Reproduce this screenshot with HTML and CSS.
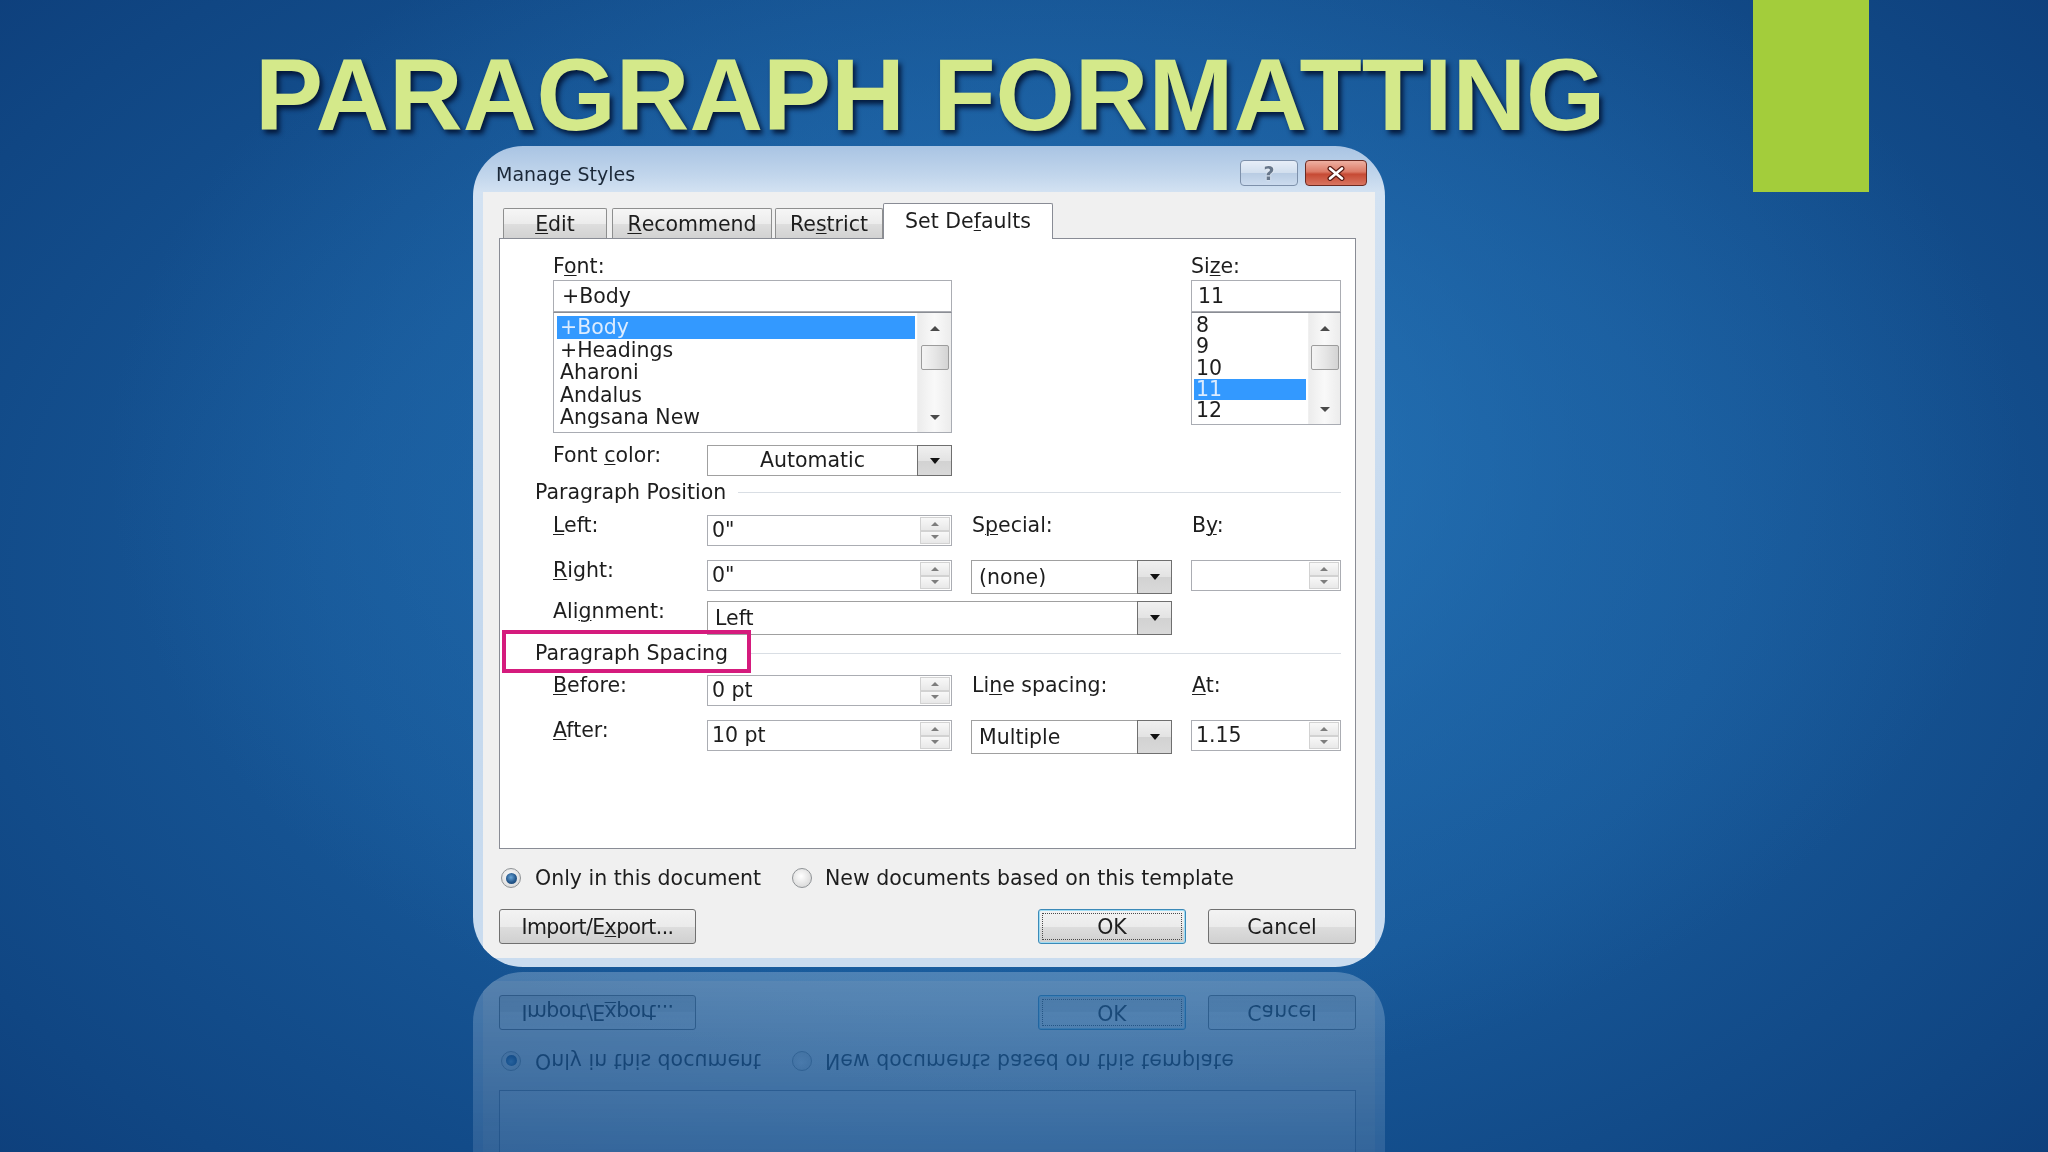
FILE: index.html
```html
<!DOCTYPE html>
<html>
<head>
<meta charset="utf-8">
<link rel="stylesheet" href="styles.css">
</head>
<body>
<div class="slide">
  <h1 class="title">PARAGRAPH FORMATTING</h1>
  <div class="accent"></div>

  <div class="dialog">
    <div class="titlebar">
      <span class="caption">Manage Styles</span>
      <div class="capbtns">
        <span class="help">?</span>
        <span class="close">
          <svg width="22" height="15" viewBox="0 0 22 15"><path d="M5 2.5 L17 12.5 M17 2.5 L5 12.5" stroke="#5b1c15" stroke-width="5" stroke-linecap="round"/><path d="M5 2.5 L17 12.5 M17 2.5 L5 12.5" stroke="#ffffff" stroke-width="2.6" stroke-linecap="round"/></svg>
        </span>
      </div>
    </div>

    <div class="client">
      <div class="tabs">
        <span class="tab t-edit"><u>E</u>dit</span>
        <span class="tab t-rec"><u>R</u>ecommend</span>
        <span class="tab t-res">Re<u>s</u>trict</span>
        <span class="tab t-set active">Set De<u>f</u>aults</span>
      </div>

      <div class="panel">
        <div class="grid r-font">
          <div class="fgroup g-font">
            <div class="glbl">F<u>o</u>nt:</div>
            <div class="textbox">+Body</div>
            <div class="listbox lb-font">
              <div class="items">
                <div class="item sel">+Body</div>
                <div class="item">+Headings</div>
                <div class="item">Aharoni</div>
                <div class="item">Andalus</div>
                <div class="item">Angsana New</div>
              </div>
              <div class="vscroll">
                <span class="sarrow"><i class="tri-up"></i></span>
                <span class="thumb"></span>
                <span class="sfill"></span>
                <span class="sarrow"><i class="tri-down"></i></span>
              </div>
            </div>
          </div>
          <div class="fgroup g-size">
            <div class="glbl">Si<u>z</u>e:</div>
            <div class="textbox tb-size">11</div>
            <div class="listbox lb-size">
              <div class="items">
                <div class="item">8</div>
                <div class="item">9</div>
                <div class="item">10</div>
                <div class="item sel">11</div>
                <div class="item">12</div>
              </div>
              <div class="vscroll">
                <span class="sarrow"><i class="tri-up"></i></span>
                <span class="thumb"></span>
                <span class="sfill"></span>
                <span class="sarrow"><i class="tri-down"></i></span>
              </div>
            </div>
          </div>
        </div>

        <div class="grid r-color">
          <div class="rl">Font <u>c</u>olor:</div>
          <div class="combo c-color"><span class="val center">Automatic</span><span class="dd"><i class="tri-dd"></i></span></div>
        </div>

        <div class="hdr h-pos"><span class="htext">Paragraph Position</span><span class="line"></span></div>

        <div class="grid r-left">
          <div class="rl"><u>L</u>eft:</div>
          <div class="spin"><span class="val">0"</span><span class="sb"><span class="half"><i class="st-up"></i></span><span class="half"><i class="st-dn"></i></span></span></div>
          <div class="rl rl2">S<u>p</u>ecial:</div>
          <div class="rl rl2">B<u>y</u>:</div>
        </div>

        <div class="grid r-right">
          <div class="rl"><u>R</u>ight:</div>
          <div class="spin"><span class="val">0"</span><span class="sb"><span class="half"><i class="st-up"></i></span><span class="half"><i class="st-dn"></i></span></span></div>
          <div class="combo"><span class="val">(none)</span><span class="dd"><i class="tri-dd"></i></span></div>
          <div class="spin"><span class="val"></span><span class="sb"><span class="half"><i class="st-up"></i></span><span class="half"><i class="st-dn"></i></span></span></div>
        </div>

        <div class="grid r-align">
          <div class="rl">Ali<u>g</u>nment:</div>
          <div class="combo c-wide"><span class="val">Left</span><span class="dd"><i class="tri-dd"></i></span></div>
        </div>

        <div class="hdr h-spc"><span class="htext mark">Paragraph Spacing</span><span class="line"></span></div>

        <div class="grid r-before">
          <div class="rl"><u>B</u>efore:</div>
          <div class="spin"><span class="val">0 pt</span><span class="sb"><span class="half"><i class="st-up"></i></span><span class="half"><i class="st-dn"></i></span></span></div>
          <div class="rl rl2">Li<u>n</u>e spacing:</div>
          <div class="rl rl2"><u>A</u>t:</div>
        </div>

        <div class="grid r-after">
          <div class="rl"><u>A</u>fter:</div>
          <div class="spin"><span class="val">10 pt</span><span class="sb"><span class="half"><i class="st-up"></i></span><span class="half"><i class="st-dn"></i></span></span></div>
          <div class="combo"><span class="val">Multiple</span><span class="dd"><i class="tri-dd"></i></span></div>
          <div class="spin"><span class="val">1.15</span><span class="sb"><span class="half"><i class="st-up"></i></span><span class="half"><i class="st-dn"></i></span></span></div>
        </div>
      </div>

      <div class="radios">
        <span class="radio on"><span class="dot"></span></span>
        <span class="rtext">Only in this document</span>
        <span class="radio r2"></span>
        <span class="rtext">New documents based on this template</span>
      </div>

      <div class="buttons">
        <span class="btn b-imp">Import/E<u>x</u>port...</span>
        <span class="btn b-ok"><span class="focus">OK</span></span>
        <span class="btn b-cancel">Cancel</span>
      </div>
    </div>
  </div>
</div>
</body>
</html>
```

FILE: styles.css
```css
* { box-sizing: border-box; }

body { margin: 0; }

.slide {
  width: 2048px;
  height: 1152px;
  overflow: hidden;
  display: grid;
  grid-template-columns: 473px 912px 368px 116px 179px;
  grid-template-rows: 146px 821px 185px;
  background:
    radial-gradient(ellipse 55% 65% at 52% 40%, rgba(44,128,196,0.75) 0%, rgba(36,112,180,0.45) 45%, rgba(30,100,170,0) 85%),
    radial-gradient(ellipse 85% 95% at 50% 50%, #1b62a3 0%, #175797 40%, #104683 70%, #0a336e 100%);
  font-family: "DejaVu Sans", sans-serif;
}

.title {
  grid-row: 1;
  grid-column: 1 / 4;
  margin: 0;
  padding: 45px 0 0 255px;
  font-family: "Liberation Sans", Arial, sans-serif;
  font-weight: bold;
  font-size: 102px;
  line-height: 100px;
  color: #d4e98a;
  text-shadow: 3px 4px 5px rgba(0, 14, 44, 0.85);
  white-space: nowrap;
}

.accent {
  grid-row: 1 / 3;
  grid-column: 4;
  height: 192px;
  background: #a3cd3b;
}

/* ---------- dialog ---------- */
.dialog {
  grid-row: 2;
  grid-column: 2;
  border-radius: 50px;
  overflow: hidden;
  display: flex;
  flex-direction: column;
  padding: 0 10px 9px;
  background: linear-gradient(#a9c4e3 0px, #c2d6ec 30px, #d3e2f2 46px, #c4d8ee 60%, #cadcef 100%);
  -webkit-box-reflect: below 5px linear-gradient(rgba(255,255,255,0) 58%, rgba(255,255,255,0.3) 100%);
  color: #1d1d1d;
  font-size: 20.5px;
}

.titlebar {
  height: 46px;
  display: flex;
  align-items: center;
  padding: 0 8px 0 13px;
}

.caption {
  font-size: 19px;
  color: #1b2838;
  margin-top: 9px;
}

.capbtns {
  margin-left: auto;
  margin-top: 8px;
  display: flex;
  gap: 7px;
}

.help {
  width: 58px;
  height: 26px;
  border: 1px solid #7d90aa;
  border-radius: 4px;
  background: linear-gradient(#e7eef8, #d2dfee 48%, #b9cce3 52%, #cbdbee);
  display: flex;
  align-items: center;
  justify-content: center;
  font-weight: bold;
  font-size: 19px;
  color: #66768a;
  text-shadow: 0 0 2px #ffffff;
}

.close {
  width: 62px;
  height: 26px;
  border: 1px solid #6a2a22;
  border-radius: 4px;
  background: linear-gradient(#eeb0a2, #dc7a66 45%, #c64a34 55%, #d97560);
  display: flex;
  align-items: center;
  justify-content: center;
}

.client {
  flex: 1;
  background: #f0f0f0;
  padding: 11px 19px 14px 16px;
  display: flex;
  flex-direction: column;
}

/* ---------- tabs ---------- */
.tabs {
  display: flex;
  align-items: flex-end;
  height: 36px;
  margin: 0 0 -1px 4px;
  position: relative;
  z-index: 1;
}

.tab {
  height: 30px;
  margin-bottom: 1px;
  border: 1px solid #8e8f8f;
  border-bottom: none;
  border-radius: 2px 2px 0 0;
  background: linear-gradient(#f6f6f6, #ececec 50%, #dedede 51%, #d2d2d2);
  display: flex;
  align-items: center;
  justify-content: center;
  white-space: nowrap;
}

.t-edit { width: 104px; margin-right: 5px; }
.t-rec { width: 160px; margin-right: 3px; }
.t-res { width: 108px; }
.t-set { width: 170px; }

.tab.active {
  height: 36px;
  margin-bottom: 0;
  background: #ffffff;
  border-color: #898c95;
  padding-bottom: 2px;
}

u { text-decoration: underline; text-decoration-thickness: 1px; text-underline-offset: 2px; }

/* ---------- panel ---------- */
.panel {
  height: 611px;
  border: 1px solid #898c95;
  background: #ffffff;
  padding: 15px 14px 0 35px;
  display: flex;
  flex-direction: column;
}

.grid {
  display: grid;
  grid-template-columns: 153px 245px 201px 150px;
  column-gap: 19px;
  align-items: start;
}

.g-font { grid-column: 1 / 3; padding-left: 18px; }
.g-size { grid-column: 4; }

.glbl { line-height: 24px; height: 24px; margin-bottom: 2px; white-space: nowrap; }

.textbox {
  height: 32px;
  border: 1px solid #abadb3;
  background: #fff;
  padding: 0 8px;
  line-height: 30px;
}
.tb-size { padding: 0 6px; }

.listbox {
  display: flex;
  border: 1px solid #a9acb3;
  border-top-color: #8a8d94;
  background: #fff;
}
.lb-font { height: 121px; }
.lb-size { height: 113px; }

.items { flex: 1; padding: 3px 2px 0 3px; }
.lb-size .items { padding: 2px 2px 0 2px; }

.item { height: 22.5px; line-height: 22.5px; padding-left: 3px; white-space: nowrap; }
.lb-size .item { height: 21.3px; line-height: 21.3px; padding-left: 2px; }
.item.sel { background: #3399ff; color: #dcecff; }

.vscroll {
  width: 34px;
  display: flex;
  flex-direction: column;
  align-items: center;
  background: linear-gradient(90deg, #ececec, #f9f9f9 50%, #ececec);
  border-left: 1px solid #f0f0f0;
}
.lb-size .vscroll { width: 32px; }

.sarrow { height: 30px; width: 100%; display: flex; align-items: center; justify-content: center; }
.sfill { flex: 1; }
.thumb {
  width: 28px;
  height: 25px;
  margin-top: 2px;
  border: 1px solid #9c9c9c;
  border-radius: 2px;
  background: linear-gradient(90deg, #f4f4f4, #e6e6e6 50%, #d3d3d3);
}

.tri-up { width: 0; height: 0; border-left: 5px solid transparent; border-right: 5px solid transparent; border-bottom: 5px solid #4a4a4a; }
.tri-down { width: 0; height: 0; border-left: 5px solid transparent; border-right: 5px solid transparent; border-top: 5px solid #4a4a4a; }
.tri-dd { width: 0; height: 0; border-left: 5px solid transparent; border-right: 5px solid transparent; border-top: 6px solid #111; }

/* rows */
.r-color { margin-top: 12px; }
.r-right { margin-top: 14px; }
.r-align { margin-top: 7px; }
.r-before { margin-top: 12px; }
.r-after { margin-top: 14px; }

.rl { line-height: 20px; padding-left: 18px; white-space: nowrap; }
.rl2 { padding-left: 1px; }

.hdr { display: flex; align-items: center; height: 20px; line-height: 20px; }
.h-pos { margin-top: 6px; margin-bottom: 13px; }
.h-spc { margin-top: 8px; }
.htext { white-space: nowrap; }
.hdr .line { flex: 1; height: 1px; background: #d9dee4; margin-left: 12px; }

.mark {
  border: 4px solid #d51b7d;
  padding: 9px 19px 6px 29px;
  margin: -13px -12px -10px -33px;
  position: relative;
  z-index: 1;
}

.spin, .combo {
  display: flex;
  border: 1px solid #abadb3;
  background: #fff;
}
.spin { height: 31px; }
.combo { height: 34px; border-color: #a0a0a0; }
.c-color { height: 31px; }
.c-wide { grid-column: 2 / 4; }

.spin .val { flex: 1; padding-left: 4px; line-height: 29px; white-space: nowrap; }
.combo .val { flex: 1; padding-left: 7px; line-height: 32px; white-space: nowrap; }
.c-color .val { line-height: 29px; }
.val.center { text-align: center; padding-left: 0; }

.combo .dd {
  width: 35px;
  border: 1px solid #6f6f6f;
  margin: -1px -1px -1px 0;
  background: linear-gradient(#f0f0f0, #e3e3e3 50%, #d2d2d2 51%, #d9d9d9);
  display: flex;
  align-items: center;
  justify-content: center;
}

.sb {
  width: 32px;
  display: flex;
  flex-direction: column;
  padding: 1px;
}
.half {
  flex: 1;
  border: 1px solid #d2d2d2;
  background: linear-gradient(#f8f8f8, #e8e8e8);
  display: flex;
  align-items: center;
  justify-content: center;
}
.st-up { width: 0; height: 0; border-left: 4px solid transparent; border-right: 4px solid transparent; border-bottom: 4px solid #7d7d7d; }
.st-dn { width: 0; height: 0; border-left: 4px solid transparent; border-right: 4px solid transparent; border-top: 4px solid #7d7d7d; }

/* ---------- radios ---------- */
.radios {
  margin-top: 17px;
  height: 24px;
  display: flex;
  align-items: center;
  padding-left: 2px;
  line-height: 24px;
  white-space: nowrap;
}

.radio {
  width: 20px;
  height: 20px;
  border-radius: 50%;
  border: 1px solid #8f9396;
  background: radial-gradient(circle at 45% 40%, #ffffff, #e2e2e2 60%, #cfcfcf);
  display: flex;
  align-items: center;
  justify-content: center;
  margin-right: 14px;
}
.radio.r2 { margin-left: 31px; margin-right: 13px; }
.dot {
  width: 11px;
  height: 11px;
  border-radius: 50%;
  background: radial-gradient(circle at 45% 40%, #6aa6d8, #24578c 55%, #163d66);
}

/* ---------- buttons ---------- */
.buttons {
  margin-top: 19px;
  height: 35px;
  display: flex;
}

.btn {
  height: 35px;
  border: 1px solid #707070;
  border-radius: 3px;
  background: linear-gradient(#f3f3f3, #ebebeb 50%, #dddddd 51%, #d0d0d0);
  display: flex;
  align-items: center;
  justify-content: center;
  white-space: nowrap;
}
.b-imp { width: 197px; letter-spacing: -0.6px; }
.b-ok {
  width: 148px;
  margin-left: auto;
  border-color: #3c8ab8;
  box-shadow: inset 0 0 0 1px #9fdcf3;
  padding: 3px;
  align-items: stretch;
}
.focus {
  flex: 1;
  border: 1px dotted #4a4a4a;
  display: flex;
  align-items: center;
  justify-content: center;
}
.b-cancel { width: 148px; margin-left: 22px; }
```
